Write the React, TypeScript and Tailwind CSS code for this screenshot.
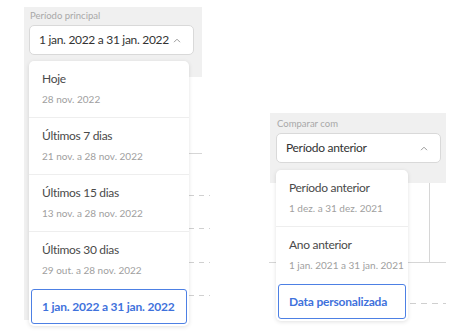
import React from "react";

const font = { fontFamily: "Lato, 'Open Sans', sans-serif" };

function Chevron() {
  return (
    <svg width="8" height="5" viewBox="0 0 8 5" className="shrink-0">
      <path d="M1 4.2 L4 1.2 L7 4.2" fill="none" stroke="#9a9a9a" strokeWidth="1" />
    </svg>
  );
}

function Item({ title, sub, last }: { title: string; sub: string; last?: boolean }) {
  return (
    <div className={`h-[57px] pl-[13px] pt-[10px] flex flex-col gap-[6px] ${last ? "" : "border-b border-[#eeeeee]"}`}>
      <div className="text-[12px] leading-[16px] tracking-[-0.3px] text-[#4a4a4a] whitespace-nowrap">{title}</div>
      <div className="text-[10px] leading-[12px] text-[#a0a0a0] whitespace-nowrap">{sub}</div>
    </div>
  );
}

function Selected({ text }: { text: string }) {
  return (
    <div className="mx-[2px] h-[35px] border-[1.5px] border-[#4d80e4] rounded-[3px] flex items-center pl-[10px] text-[12px] tracking-[-0.2px] font-bold text-[#3f72dc] whitespace-nowrap">
      {text}
    </div>
  );
}

function Select({ label, value, pad }: { label: string; value: string; pad: string }) {
  return (
    <div className={`h-[70px] bg-[#f0f0f0] flex flex-col gap-[3px] ${pad}`}>
      <div className="text-[9.5px] leading-[12px] text-[#a8a8a8] pl-[1px]">{label}</div>
      <div className="h-[30px] w-[165px] bg-white border border-[#d9d9d9] rounded-[5px] flex items-center justify-between pl-[9px] pr-[12px]">
        <span className="text-[12px] tracking-[-0.3px] text-[#333] whitespace-nowrap">{value}</span>
        <Chevron />
      </div>
    </div>
  );
}

function ChartLines() {
  return (
    <svg className="absolute inset-0" width="474" height="336">
      <rect x="24" y="77" width="5" height="243" fill="#f0f0f0" />
      <line x1="150" y1="153.5" x2="202" y2="153.5" stroke="#d6d6d6" />
      {[195, 228, 262, 295].map((y) => (
        <line key={y} x1="189" y1={y + 0.5} x2="210" y2={y + 0.5} stroke="#d0d0d0" strokeDasharray="5 5" />
      ))}
      <line x1="429.5" y1="183" x2="429.5" y2="262" stroke="#d6d6d6" />
      <line x1="269" y1="262.5" x2="446" y2="262.5" stroke="#d6d6d6" />
      <line x1="300" y1="303.5" x2="446" y2="303.5" stroke="#cfcfcf" strokeDasharray="6 5" />
    </svg>
  );
}

export default function App() {
  return (
    <div className="relative w-[474px] h-[336px] bg-white overflow-hidden" style={font}>
      <ChartLines />
      <div className="relative flex items-start pl-[24px] gap-[68px]">
        {/* Left */}
        <div className="relative mt-[7px] w-[178px]">
          <Select label="Período principal" value="1 jan. 2022 a 31 jan. 2022" pad="px-[5px] pt-[3px]" />
          <div className="absolute left-[5px] top-[54px] w-[160px] bg-white rounded-[5px] shadow-[0_1px_4px_rgba(0,0,0,0.12)] pb-[2px]">
            <Item title="Hoje" sub="28 nov. 2022" />
            <Item title="Últimos 7 dias" sub="21 nov. a 28 nov. 2022" />
            <Item title="Últimos 15 dias" sub="13 nov. a 28 nov. 2022" />
            <Item title="Últimos 30 dias" sub="29 out. a 28 nov. 2022" last />
            <Selected text="1 jan. 2022 a 31 jan. 2022" />
          </div>
        </div>

        {/* Right */}
        <div className="relative mt-[113px] w-[176px]">
          <Select label="Comparar com" value="Período anterior" pad="px-[6px] pt-[5px]" />
          <div className="absolute left-[6px] top-[57px] w-[132px] bg-white rounded-[5px] shadow-[0_1px_4px_rgba(0,0,0,0.12)] pb-[2px]">
            <Item title="Período anterior" sub="1 dez. a 31 dez. 2021" />
            <Item title="Ano anterior" sub="1 jan. 2021 a 31 jan. 2021" last />
            <Selected text="Data personalizada" />
          </div>
        </div>
      </div>
    </div>
  );
}
